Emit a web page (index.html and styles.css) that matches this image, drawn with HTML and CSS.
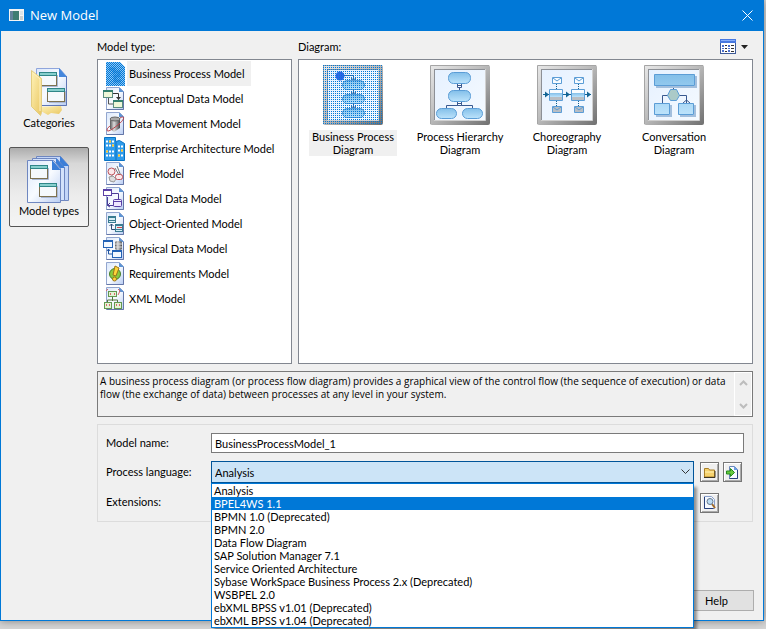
FILE: index.html
```html
<!DOCTYPE html>
<html lang="en">
<head>
  <meta charset="UTF-8">
  <meta name="viewport" content="width=device-width, initial-scale=1.0">
  <title>New Model</title>
  <link rel="stylesheet" href="styles.css">
</head>
<body>

<!-- shared gradients and shapes -->
<svg class="defs" aria-hidden="true">
  <defs>
    <linearGradient id="paper" x1="0" y1="0" x2="1" y2="1">
      <stop offset="0" stop-color="#dbe8fb"/><stop offset=".5" stop-color="#f8fbff"/><stop offset="1" stop-color="#b9cdf3"/>
    </linearGradient>
    <linearGradient id="frame" x1="0" y1="0" x2="1" y2="1">
      <stop offset="0" stop-color="#e8e8e8"/><stop offset=".45" stop-color="#bdbdbd"/><stop offset="1" stop-color="#707070"/>
    </linearGradient>
    <linearGradient id="sky" x1="0" y1="0" x2="1" y2="1">
      <stop offset="0" stop-color="#e6f1ff"/><stop offset="1" stop-color="#f5faff"/>
    </linearGradient>
    <linearGradient id="pill" x1="0" y1="0" x2="0" y2="1">
      <stop offset="0" stop-color="#83bfe9"/><stop offset="1" stop-color="#bce3fb"/>
    </linearGradient>
    <linearGradient id="gold" x1="0" y1="0" x2="1" y2="1">
      <stop offset="0" stop-color="#fff3b8"/><stop offset="1" stop-color="#e9c661"/>
    </linearGradient>
    <linearGradient id="metal" x1="0" y1="0" x2="1" y2="0">
      <stop offset="0" stop-color="#555"/><stop offset=".4" stop-color="#ddd"/><stop offset="1" stop-color="#444"/>
    </linearGradient>
    <pattern id="dither" width="2" height="2" patternUnits="userSpaceOnUse">
      <path d="M0 0h1v1h-1zM1 1h1v1h-1z" fill="#0078d7" shape-rendering="crispEdges"/>
    </pattern>
    <pattern id="dots" width="2" height="2" patternUnits="userSpaceOnUse">
      <path d="M0 0h1v1h-1z" fill="#0078d7" shape-rendering="crispEdges"/>
    </pattern>
    <symbol id="page" viewBox="0 0 22 24">
      <path d="M3.500 .5h13l4 4v18h-17z" fill="url(#paper)" stroke="#93a6cf"/>
      <path d="M20.500 5v17.500h-17" fill="none" stroke="#6577a8"/>
      <path d="M16 .5v4.500h5z" fill="#5b93d4"/>
    </symbol>
    <symbol id="tile" viewBox="0 0 60 60">
      <rect width="60" height="60" rx="2" fill="url(#frame)"/>
      <path d="M.5 59V.5H59" fill="none" stroke="#a5a5a5"/>
      <rect x="4.500" y="4.500" width="51" height="51" fill="url(#sky)" stroke="#8d9096"/>
      <path d="M4 55.500h51.500V4" fill="none" stroke="#d0d0d0"/>
    </symbol>
    <symbol id="win" viewBox="0 0 19 15">
      <path d="M2 14.500h16.500V3" fill="none" stroke="#aab8d4"/>
      <rect x=".5" y=".5" width="17" height="13" fill="#f5f9fc" stroke="#7e7250"/>
      <path d="M0 0h18v4H0z" fill="#2f8688"/>
      <path d="M1 1h16v2H1z" fill="#86cfcd"/>
    </symbol>
  </defs>
</svg>

<main class="dialog">
  <header class="titlebar">
    <svg width="15" height="14" viewBox="0 0 15 14" aria-hidden="true">
      <path d="M0 1h15v12H0z" fill="#f4f4f4"/><path d="M1 3h9v9H1z" fill="#3f7d72"/><path d="M1 3h3v9H1z" fill="#63839b"/>
      <path d="M11 3h3v4h-3z" fill="#dce4e8"/><path d="M11 8h3v4h-3z" fill="#c9cfd0"/>
    </svg>
    <h1>New Model</h1>
    <button class="close" type="button" aria-label="Close">
      <svg width="11" height="11" viewBox="0 0 11 11"><path d="M.5 .5l10 10M10.500 .5l-10 10" stroke="#fff" fill="none"/></svg>
    </button>
  </header>

  <div class="content">
    <nav class="side">
      <button class="side-btn" type="button">
        <svg width="48" height="49" viewBox="0 0 48 49">
          <path d="M14 40l22-1 1 4-3 4-8-1-3 2-9-5z" fill="url(#gold)"/>
          <path d="M11.500 1.500h23l7 8v29h-30z" fill="url(#paper)" stroke="#8fa5dc"/>
          <path d="M41.500 9v29.500h-25" fill="none" stroke="#5e76b5"/>
          <path d="M34 1v9h8z" fill="#4587dc"/>
          <use href="#win" x="14" y="5" width="19" height="15"/>
          <use href="#win" x="22" y="21" width="19" height="15"/>
          <path d="M6.500 3.500l10 8v34l-1 3-9-9z" fill="url(#gold)" stroke="#e3cd80"/>
          <path d="M8 6l7 6v32" fill="none" stroke="#fff3c2"/>
        </svg>
        <span>Categories</span>
      </button>
      <button class="side-btn active" type="button">
        <svg width="48" height="49" viewBox="0 0 48 49">
          <path d="M11.500 1.500h24l8 9v35h-32z" fill="#c4d6f8" stroke="#6f87c0"/><path d="M35 1v10h9z" fill="#3b7ed8"/>
          <path d="M7.500 3.500h24l8 9v33h-32z" fill="#d4e2fb" stroke="#6f87c0"/><path d="M31 3v10h9z" fill="#3b7ed8"/>
          <path d="M2.500 5.500h26l7 8v34h-33z" fill="url(#paper)" stroke="#6f87c0"/><path d="M27 5v10h9z" fill="#3b7ed8"/>
          <use href="#win" x="5" y="10" width="19" height="15"/>
          <use href="#win" x="14" y="28" width="19" height="15"/>
        </svg>
        <span>Model types</span>
      </button>
    </nav>

    <div class="panel">
      <div class="pickers">
        <section class="types">
          <h2 id="types-title">Model type:</h2>
          <ul class="box type-list" aria-labelledby="types-title">
            <li><button class="type selected" type="button">
              <svg width="23" height="24" viewBox="0 0 23 24">
                <path d="M3 0h14l5 5v19H3z" fill="#8ec6f4"/>
                <path d="M6 7h5v3h5v4h-4v5h6" fill="none" stroke="#4b9de2" stroke-width="3"/>
                <path d="M3 0h14l5 5v19H3z" fill="url(#dither)"/>
              </svg><span>Business Process Model</span></button></li>
            <li><button class="type" type="button">
              <svg width="23" height="24" viewBox="0 0 23 24">
                <use href="#page" width="22" height="24"/>
                <path d="M5.500 11v6h5" fill="none" stroke="#555"/><path d="M10 6.500h5.500v6" fill="none" stroke="#333"/><path d="M13 10h5l-2.500 3z" fill="#333"/>
                <rect x=".5" y="3.500" width="9" height="7" fill="#eef7d8" stroke="#5a8c80"/><path d="M0 3h10v2H0z" fill="#33806f"/>
                <rect x="10.500" y="13.500" width="9" height="7" fill="#eef7d8" stroke="#5a8c80"/><path d="M10 13h10v2H10z" fill="#33806f"/>
              </svg><span>Conceptual Data Model</span></button></li>
            <li><button class="type" type="button">
              <svg width="23" height="24" viewBox="0 0 23 24">
                <use href="#page" width="22" height="24"/>
                <path d="M7 8l8-3 2 3v8l-6 4-4-3z" fill="url(#metal)"/><ellipse cx="12" cy="7" rx="5" ry="2" fill="#aaa" stroke="#666"/>
                <path d="M17 6c5-3 5 1-1 6S4 21 4 18c0-2 2-3 3-4" fill="none" stroke="#bb4048"/>
              </svg><span>Data Movement Model</span></button></li>
            <li><button class="type" type="button">
              <svg width="23" height="24" viewBox="0 0 23 24">
                <path d="M1.500 .5h11v4l4-1 5 3v17h-20z" fill="#2f9bea" stroke="#0872c4"/>
                <path d="M13 5v18" fill="none" stroke="#0872c4"/>
                <path d="M3 4.500h9M3 8.500h9M3 14.500h9M3 18.500h9M15 9.500h5M15 13.500h5M15 18.500h5" stroke="#fff" stroke-width="2" stroke-dasharray="2 1"/>
                <path d="M6 3.500h2v2H6zM9 7.500h2v2H9zM3 13.500h2v2H3zM18 12.500h2v2h-2zM15 17.500h2v2h-2z" fill="#ffc426"/>
              </svg><span>Enterprise Architecture Model</span></button></li>
            <li><button class="type" type="button">
              <svg width="23" height="24" viewBox="0 0 23 24">
                <use href="#page" width="22" height="24"/>
                <path d="M12 6l4 7M8 12l4 6M14 4l4 10" fill="none" stroke="#777"/>
                <circle cx="8.500" cy="9.500" r="3.500" fill="#fbe9ea" stroke="#bd5259"/>
                <rect x="12.500" y="12.500" width="7" height="5" rx="2" fill="#fbe9ea" stroke="#bd5259"/>
                <path d="M6 15l4-1 3 3-2 3-4-1z" fill="#ddd" stroke="#999"/>
              </svg><span>Free Model</span></button></li>
            <li><button class="type" type="button">
              <svg width="23" height="24" viewBox="0 0 23 24">
                <use href="#page" width="22" height="24"/>
                <path d="M4.500 10v8.500H11M9 6.500h6.500V13M7 16l-2.500 2.500L7 20" fill="none" stroke="#4b3c96"/>
                <rect x=".5" y="2.500" width="8" height="6" fill="#fff" stroke="#5a40a6"/><path d="M0 2h9v2H0z" fill="#5a40a6"/>
                <rect x="10.500" y="12.500" width="8" height="7" rx="1" fill="#eee8ff" stroke="#5a40a6"/><path d="M10 14.500h9" stroke="#5a40a6"/>
              </svg><span>Logical Data Model</span></button></li>
            <li><button class="type" type="button">
              <svg width="23" height="24" viewBox="0 0 23 24">
                <use href="#page" width="22" height="24"/>
                <path d="M8.500 12v5.500H12M6.500 14l2-2 2 2" fill="none" stroke="#2b4a74"/>
                <rect x="5.500" y="4.500" width="7" height="6" fill="#d7eef5" stroke="#397b91"/><path d="M5 4h8v2H5zM6 8h6v1H6z" fill="#397b91"/>
                <rect x="12.500" y="12.500" width="7" height="7" fill="#d7eef5" stroke="#397b91"/><path d="M12 12h8v2h-8zM13 17h6v1h-6z" fill="#397b91"/><path d="M14 15h5v1h-5z" fill="#d0484c"/>
              </svg><span>Object-Oriented Model</span></button></li>
            <li><button class="type" type="button">
              <svg width="23" height="24" viewBox="0 0 23 24">
                <use href="#page" width="22" height="24"/>
                <path d="M5.500 12v5H9M4 14l1.500-2L7 14" fill="none" stroke="#2155a1"/>
                <rect x="12" y="4" width="7" height="9" rx="2" fill="url(#metal)"/><path d="M12 7h7M12 10h7" stroke="#ddd"/>
                <rect x=".5" y="3.500" width="9" height="7" fill="#f4f9ff" stroke="#2463b5"/><path d="M0 3h10v2H0z" fill="#2463b5"/>
                <rect x="9.500" y="13.500" width="9" height="7" fill="#f4f9ff" stroke="#2463b5"/><path d="M9 13h10v2H9z" fill="#2463b5"/>
              </svg><span>Physical Data Model</span></button></li>
            <li><button class="type" type="button">
              <svg width="23" height="24" viewBox="0 0 23 24">
                <use href="#page" width="22" height="24"/>
                <circle cx="12" cy="12" r="5.500" fill="#8aca3e" stroke="#477d2a"/>
                <path d="M12 4l4 2-3 8-3-1z" fill="#ffd43a" stroke="#9b7617"/><circle cx="11.500" cy="17" r="2" fill="#ffd43a" stroke="#9b7617"/>
              </svg><span>Requirements Model</span></button></li>
            <li><button class="type" type="button">
              <svg width="23" height="24" viewBox="0 0 23 24">
                <use href="#page" width="22" height="24"/>
                <path d="M9.500 10v4M4.500 16v-3h10v3" fill="none" stroke="#56743f"/>
                <g fill="#e3f4d5" stroke="#639750"><rect x="5.500" y="4.500" width="8" height="5"/><rect x="1.500" y="15.500" width="7" height="6"/><rect x="11.500" y="15.500" width="7" height="6"/></g>
                <path d="M8 6l-1 1 1 1M11 6l1 1-1 1M4 17l-1 1 1 1M6 17l1 1-1 1M14 17l-1 1 1 1M16 17l1 1-1 1M5 2L3 4M15 2l2 2-2 4" fill="none" stroke="#d7686d"/>
              </svg><span>XML Model</span></button></li>
          </ul>
        </section>

        <section class="diagrams">
          <div class="diagram-head">
            <h2 id="diagrams-title">Diagram:</h2>
            <button class="view" type="button" aria-label="View">
              <svg width="28" height="15" viewBox="0 0 28 15">
                <path d="M0 0h16v15H0z" fill="#3d5a98"/><path d="M1 4h14v10H1z" fill="#fff"/><path d="M0 0h16v4H0z" fill="#4778e0"/><path d="M1 1h14v1H1z" fill="#86adfa"/>
                <path d="M2 6h2v2H2zM8 6h2v2H8zM2 9h2v1H2zM8 9h2v1H8zM2 11h2v2H2zM8 11h2v2H8z" fill="#4a6fd0"/>
                <path d="M5 6.500h2M11 6.500h3M5 9.500h2M11 9.500h3M5 12.500h2M11 12.500h3" stroke="#333"/>
                <path d="M21 6h7l-3.500 4z" fill="#222"/>
              </svg>
            </button>
          </div>
          <ul class="box diagram-list" aria-labelledby="diagrams-title">
            <li><button class="diagram selected" type="button">
              <svg width="60" height="60" viewBox="0 0 60 60">
                <use href="#tile" width="60" height="60"/>
                <path d="M17 10.500h13.500v40M28 13l2.500 2 2.500-2M28 27l2.500 2 2.500-2M28 41l2.500 2 2.500-2" fill="none" stroke="#37659b"/>
                <circle cx="17" cy="11" r="4.500" fill="#3165e8"/>
                <g fill="url(#pill)" stroke="#5b9dd6"><rect x="19.500" y="15.500" width="22" height="9" rx="4.500"/><rect x="19.500" y="29.500" width="22" height="9" rx="4.500"/><rect x="19.500" y="43.500" width="22" height="9" rx="4.500"/></g>
                <rect width="60" height="60" fill="url(#dots)"/>
              </svg><span>Business Process Diagram</span></button></li>
            <li><button class="diagram" type="button">
              <svg width="60" height="60" viewBox="0 0 60 60">
                <use href="#tile" width="60" height="60"/>
                <path d="M29.500 17v8M29.500 35v6M16.500 44v-3.500h26V44" fill="none" stroke="#39598f"/>
                <path d="M27.500 18.500h4v4h-4zM27.500 20.500h4M27.500 36.500h4v4h-4zM27.500 38.500h4" fill="#fff" stroke="#39598f"/>
                <g fill="url(#pill)" stroke="#5b9dd6"><rect x="18.500" y="7.500" width="22" height="11" rx="5"/><rect x="18.500" y="25.500" width="22" height="11" rx="5"/><rect x="6.500" y="43.500" width="20" height="10" rx="5"/><rect x="32.500" y="43.500" width="20" height="10" rx="5"/></g>
              </svg><span>Process Hierarchy Diagram</span></button></li>
            <li><button class="diagram" type="button">
              <svg width="60" height="60" viewBox="0 0 60 60">
                <use href="#tile" width="60" height="60"/>
                <path d="M6 29.500h7M26 29.500h8M48 29.500h6" stroke="#126494"/>
                <path d="M8 26.500l4 3-4 3zM29 26.500l4 3-4 3zM50 26.500l4 3-4 3z" fill="#126494"/>
                <path d="M19.500 19v5M41.500 19v5M19.500 36v5M41.500 36v5" stroke="#126494" stroke-dasharray="1 1"/>
                <g fill="#f8fcff" stroke="#5b9dd6"><path d="M15.500 12.500h9v6h-9zM37.500 12.500h9v6h-9z"/><path d="M12.500 24.500h13v11h-13zM34.500 24.500h13v11h-13z"/></g>
                <path d="M13 28h12v4H13zM35 28h12v4H35z" fill="url(#pill)"/><path d="M13 32h12v3H13zM35 32h12v3H35z" fill="#b9bec3"/>
                <g fill="#b9bec3" stroke="#5b9dd6"><path d="M15.500 41.500h9v6h-9zM37.500 41.500h9v6h-9z"/></g>
                <path d="M16 13l4 3 4-3M38 13l4 3 4-3M16 42l4 3 4-3M38 42l4 3 4-3" fill="none" stroke="#5b9dd6"/>
              </svg><span>Choreography Diagram</span></button></li>
            <li><button class="diagram" type="button">
              <svg width="60" height="60" viewBox="0 0 60 60">
                <use href="#tile" width="60" height="60"/>
                <path d="M29.500 20v5M24 30.500h-5.500V39M35 30.500h7.500V39M39 38l3.500-3 3.500 3" fill="none" stroke="#39598f"/>
                <path d="M12 22h40V11M12 51h15V40M36 51h15V40" fill="none" stroke="#a3bfdd" stroke-width="2"/>
                <g fill="url(#pill)" stroke="#5b9dd6"><path d="M10.500 9.500h40v11h-40zM10.500 38.500h15v11h-15zM34.500 38.500h15v11h-15z"/></g>
                <path d="M26.500 24.500h6l3 6-3 5h-6l-3-5z" fill="#abcac8" stroke="#5b9dd6"/>
              </svg><span>Conversation Diagram</span></button></li>
          </ul>
        </section>
      </div>

      <div class="description">
        <p>A business process diagram (or process flow diagram) provides a graphical view of the control flow (the sequence of execution) or data flow (the exchange of data) between processes at any level in your system.</p>
        <div class="scroll" aria-hidden="true">
          <svg width="9" height="6" viewBox="0 0 9 6"><path d="M1 5l3.500-3.500L8 5" fill="none" stroke="#bdbdbd" stroke-width="2"/></svg>
          <svg width="9" height="6" viewBox="0 0 9 6"><path d="M1 1l3.500 3.500L8 1" fill="none" stroke="#bdbdbd" stroke-width="2"/></svg>
        </div>
      </div>

      <form class="options">
        <label for="model-name">Model name:</label>
        <input id="model-name" type="text" value="BusinessProcessModel_1">

        <label for="language">Process language:</label>
        <div class="language-row">
          <div class="combo">
            <select id="language">
              <option>Analysis</option>
            </select>
            <svg class="chevron" width="9" height="6" viewBox="0 0 9 6"><path d="M.5 .5l4 4 4-4" fill="none" stroke="#333"/></svg>
            <ul class="menu" role="listbox" aria-label="Process language">
              <li role="option">Analysis</li>
              <li role="option" class="hot" aria-selected="true">BPEL4WS 1.1</li>
              <li role="option">BPMN 1.0 (Deprecated)</li>
              <li role="option">BPMN 2.0</li>
              <li role="option">Data Flow Diagram</li>
              <li role="option">SAP Solution Manager 7.1</li>
              <li role="option">Service Oriented Architecture</li>
              <li role="option">Sybase WorkSpace Business Process 2.x (Deprecated)</li>
              <li role="option">WSBPEL 2.0</li>
              <li role="option">ebXML BPSS v1.01 (Deprecated)</li>
              <li role="option">ebXML BPSS v1.04 (Deprecated)</li>
            </ul>
          </div>
          <button class="tool" type="button" aria-label="Browse">
            <svg width="13" height="13" viewBox="0 0 13 13"><path d="M1.500 11V2.500h4l1 1.500h5v7z" fill="#f6d26d" stroke="#a87e28"/><path d="M2 6h9" stroke="#fff2b8"/><path d="M1 11.500h11V5" fill="none" stroke="#3d3523"/></svg>
          </button>
          <button class="tool" type="button" aria-label="Import">
            <svg width="13" height="13" viewBox="0 0 13 13"><path d="M3.500 .5h5l3 3v9h-8z" fill="#f5f9ff" stroke="#6a86b9"/><path d="M11.500 4v8.500h-8" fill="none" stroke="#263f7b"/><path d="M8 0v4h4z" fill="#6a9ce0"/><path d="M.5 5h4V2.500L8.500 6.500l-4 4V8h-4z" fill="#64c83c" stroke="#268a20"/></svg>
          </button>
        </div>

        <label for="extensions">Extensions:</label>
        <div class="language-row">
          <input id="extensions" type="text">
          <button class="tool" type="button" aria-label="Select extensions">
            <svg width="13" height="13" viewBox="0 0 13 13"><path d="M1.500 .5h7l3 3v9h-10z" fill="#f5f9ff" stroke="#8aa0cc"/><path d="M1.500 1v11.500h9" fill="none" stroke="#263f7b"/><path d="M9 8l3 4" stroke="#a56d2a" stroke-width="2"/><circle cx="7" cy="5.500" r="3" fill="#bcdcf4" stroke="#66788c"/></svg>
          </button>
        </div>
      </form>
    </div>
  </div>

  <footer class="actions">
    <button class="help" type="button">Help</button>
  </footer>
</main>

</body>
</html>
```
FILE: styles.css
```css
* {
  box-sizing: border-box;
}
body {
  margin: 0;
  min-height: 100vh;
  display: flex;
  padding: 0 2px 8px 0;
  background: #d4d4d4;
  color: #000;
  font: 11px/13px Lato, "Liberation Sans", Arial, sans-serif;
}
ul, h1, h2, p {
  margin: 0;
  padding: 0;
  list-style: none;
  font-weight: normal;
}
h2 {
  font-size: 11px;
}
button, input, select {
  font: inherit;
  color: inherit;
  border-radius: 0;
}
button {
  padding: 0;
  border: none;
  background: none;
}
svg {
  display: block;
  flex: none;
}
.defs {
  position: absolute;
  width: 0;
  height: 0;
}

.dialog {
  flex: 1;
  display: flex;
  flex-direction: column;
  border: 1px solid #0078d7;
  border-top: none;
  background: #f0f0f0;
  box-shadow: 0 0 8px rgba(0, 0, 0, 0.4);
}

/* title bar */
.titlebar {
  display: flex;
  align-items: center;
  gap: 6px;
  height: 31px;
  padding: 0 10px 1px 8px;
  background: #0078d7;
  color: #fff;
}
.titlebar h1 {
  flex: 1;
  font: 13px/18px "Open Sans", "Noto Sans", sans-serif;
}

.content {
  display: flex;
  gap: 8px;
  padding: 0 10px 0 8px;
}

/* left buttons */
.side {
  display: flex;
  flex-direction: column;
  gap: 8px;
  width: 80px;
  padding-top: 28px;
}
.side-btn {
  display: flex;
  flex-direction: column;
  align-items: center;
  height: 80px;
  padding-top: 7px;
  border: 1px solid transparent;
}
.side-btn.active {
  border-color: #555;
  border-radius: 2px;
  background: linear-gradient(#adadad, #d8d8d8 20%, #ececec 60%, #f4f4f4);
}

.panel {
  flex: 1;
  min-width: 0;
  display: flex;
  flex-direction: column;
  gap: 7px;
}
.pickers {
  display: flex;
  gap: 6px;
}
.types {
  width: 195px;
}
.diagrams {
  flex: 1;
}
.types h2,
.diagram-head {
  display: flex;
  align-items: center;
  height: 28px;
  padding-top: 3px;
}
.diagram-head {
  justify-content: space-between;
  padding-right: 5px;
}
.box {
  height: 305px;
  border: 1px solid #828790;
  background: #fff;
}

/* model types */
.type-list {
  padding: 1px 5px;
}
.type {
  display: flex;
  align-items: center;
  gap: 1px;
  height: 25px;
}
.type span {
  padding: 6px 6px 6px 2px;
  white-space: nowrap;
}
.selected span {
  background: #f0f0f0;
}

/* diagrams */
.diagram-list {
  display: flex;
  flex-wrap: wrap;
  align-content: flex-start;
  gap: 19px;
  padding: 5px 10px;
}
.diagram {
  display: flex;
  flex-direction: column;
  align-items: center;
  gap: 5px;
  width: 88px;
}
.diagram span {
  width: 100%;
}

.description {
  display: flex;
  height: 46px;
  border: 1px solid #7a7a7a;
}
.description p {
  flex: 1;
  padding: 3px 0 3px 2px;
  font-family: "Open Sans", "Noto Sans", sans-serif;
  font-size: 10px;
}
.scroll {
  display: flex;
  flex-direction: column;
  justify-content: space-between;
  align-items: center;
  width: 18px;
  padding: 7px 0 6px;
  border: 1px solid #fff;
}

/* options group */
.options {
  display: grid;
  grid-template-columns: 105px 1fr;
  grid-template-rows: 20px 22px 23px;
  row-gap: 8px;
  align-items: center;
  padding: 8px 8px 7px 8px;
  border: 1px solid #dcdcdc;
}
.options label {
  padding-bottom: 2px;
}
.options input {
  width: 100%;
  height: 20px;
  padding: 0 3px;
  border: 1px solid #7a7a7a;
  background: #fff;
}
.language-row {
  display: flex;
  align-items: center;
  gap: 4px;
  padding-right: 2px;
}
.combo {
  position: relative;
  flex: 1;
  margin-right: 2px;
}
.combo select {
  display: block;
  width: 100%;
  height: 22px;
  padding: 0 3px;
  appearance: none;
  border: 1px solid #005499;
  background: #cce4f7;
}
.chevron {
  position: absolute;
  top: 8px;
  right: 4px;
  pointer-events: none;
}
.menu {
  position: absolute;
  z-index: 10;
  top: 100%;
  left: 0;
  right: 0;
  border: 1px solid #0078d7;
  background: #fff;
  box-shadow: 3px 4px 3px rgba(0, 0, 0, 0.4);
}
.menu li {
  padding: 0 2px;
}
.menu .hot {
  background: #0078d7;
  color: #fff;
}
.tool {
  display: flex;
  align-items: center;
  justify-content: center;
  flex: none;
  width: 19px;
  height: 20px;
  border: 1px solid #777;
  box-shadow: inset 1px 1px #fff, inset -1px -1px #aaa;
}
#extensions {
  flex: 1;
  margin-right: 2px;
}
.language-row:last-child {
  padding-right: 25px;
}

.actions {
  display: flex;
  justify-content: flex-end;
  margin-top: auto;
  padding: 0 9px 9px;
}
.help {
  width: 75px;
  height: 21px;
  border: 1px solid #adadad;
  background: #e1e1e1;
}
```
